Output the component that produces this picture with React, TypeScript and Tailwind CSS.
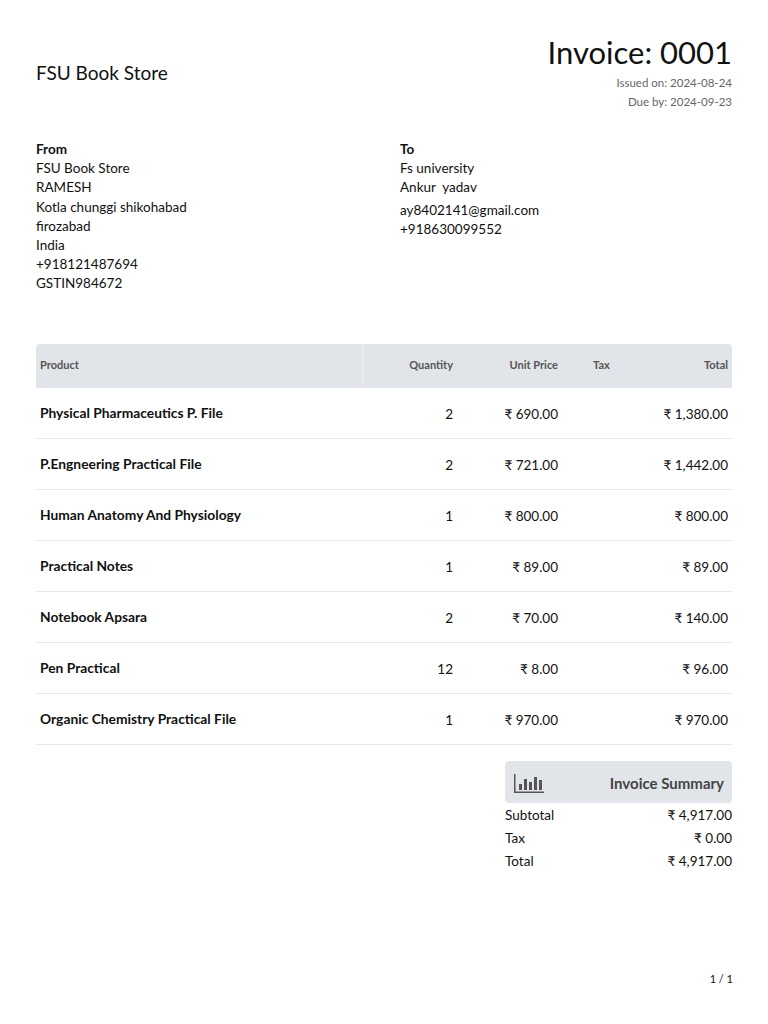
export default function App() {
  const rows = [
    ["Physical Pharmaceutics P. File", "2", "₹ 690.00", "₹ 1,380.00"],
    ["P.Engneering Practical File", "2", "₹ 721.00", "₹ 1,442.00"],
    ["Human Anatomy And Physiology", "1", "₹ 800.00", "₹ 800.00"],
    ["Practical Notes", "1", "₹ 89.00", "₹ 89.00"],
    ["Notebook Apsara", "2", "₹ 70.00", "₹ 140.00"],
    ["Pen Practical", "12", "₹ 8.00", "₹ 96.00"],
    ["Organic Chemistry Practical File", "1", "₹ 970.00", "₹ 970.00"],
  ];
  const grid = "grid grid-cols-[327px_94px_105px_78px_1fr]";
  return (
    <div className="w-[768px] h-[1024px] bg-white text-[#111] px-[36px] pt-[32px] relative" style={{ fontFamily: "Lato, 'Noto Sans', sans-serif" }}>
      <div className="flex justify-between items-start">
        <div className="text-[19px] mt-[27px]">FSU Book Store</div>
        <div className="text-right">
          <div className="text-[31px] leading-[40px]">Invoice: 0001</div>
          <div className="text-[11.5px] text-[#666] leading-[19px] mt-[1px]">Issued on: 2024-08-24</div>
          <div className="text-[11.5px] text-[#666] leading-[19px]">Due by: 2024-09-23</div>
        </div>
      </div>
      <div className="flex mt-[29px] text-[13.5px] leading-[19.2px]">
        <div className="w-[364px]">
          <div className="font-bold">From</div>
          <div>FSU Book Store</div>
          <div>RAMESH</div>
          <div>Kotla chunggi shikohabad</div>
          <div>firozabad</div>
          <div>India</div>
          <div>+918121487694</div>
          <div>GSTIN984672</div>
        </div>
        <div>
          <div className="font-bold">To</div>
          <div>Fs university</div>
          <div className="mb-[3px]">Ankur&nbsp; yadav</div>
          <div>ay8402141@gmail.com</div>
          <div>+918630099552</div>
        </div>
      </div>
      <div className="mt-[50px]">
        <div className={`${grid} h-[44px] items-center bg-[#e1e4e8] rounded-t-[4px] text-[11px] font-bold text-[#555]`}>
          <div className="pl-[4px] h-full flex items-center border-r border-[#eceef0]">Product</div>
          <div className="text-right pr-[4px]">Quantity</div>
          <div className="text-right pr-[4px]">Unit Price</div>
          <div className="pl-[31px]">Tax</div>
          <div className="text-right pr-[4px]">Total</div>
        </div>
        {rows.map((r) => (
          <div key={r[0]} className={`${grid} h-[51px] pt-[2px] items-center border-b border-[#e5e7eb] text-[13.5px]`}>
            <div className="pl-[4px] font-bold text-[13.8px]">{r[0]}</div>
            <div className="text-right pr-[4px]">{r[1]}</div>
            <div className="text-right pr-[4px]">{r[2]}</div>
            <div></div>
            <div className="text-right pr-[4px]">{r[3]}</div>
          </div>
        ))}
      </div>
      <div className="flex justify-end mt-[16px]">
        <div className="w-[227px] text-[13.5px]">
          <div className="h-[42px] bg-[#e1e4e8] rounded-[4px] flex items-center justify-between px-[8px] pt-[3px]">
            <svg width="32" height="24" viewBox="0 0 32 24" fill="#555">
              <rect x="1" y="3" width="1.5" height="19" />
              <rect x="1" y="20.5" width="30" height="1.5" />
              <rect x="6" y="13" width="3" height="6" />
              <rect x="11" y="8" width="3" height="11" />
              <rect x="16" y="11" width="3" height="8" />
              <rect x="21" y="6" width="3" height="13" />
              <rect x="26" y="9" width="3" height="10" />
            </svg>
            <span className="text-[15px] font-bold text-[#444]">Invoice Summary</span>
          </div>
          <div className="flex justify-between leading-[23px] mt-[1px]"><span>Subtotal</span><span>₹ 4,917.00</span></div>
          <div className="flex justify-between leading-[23px]"><span>Tax</span><span>₹ 0.00</span></div>
          <div className="flex justify-between leading-[23px]"><span>Total</span><span>₹ 4,917.00</span></div>
        </div>
      </div>
      <div className="absolute right-[35px] top-[971px] text-[11px]">1 / 1</div>
    </div>
  );
}
